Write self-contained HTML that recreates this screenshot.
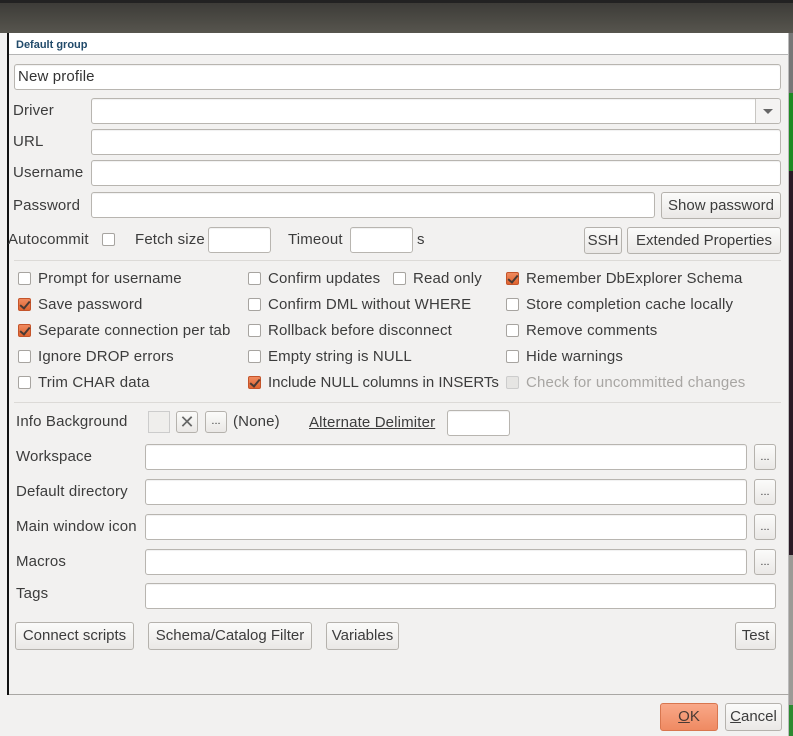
<!DOCTYPE html>
<html><head><meta charset="utf-8"><style>
*{box-sizing:border-box;margin:0;padding:0}
body{width:793px;height:736px;overflow:hidden;background:#f2f1f0;font-family:"Liberation Sans",sans-serif;font-size:15px;letter-spacing:.15px;color:#3c3c3c;position:relative}
.a{position:absolute;white-space:nowrap}
.in{position:absolute;background:#fff;border:1px solid #b8b5b0;border-radius:3px;box-shadow:inset 0 1px 1px rgba(0,0,0,.06)}
.bt{position:absolute;border:1px solid #b5b2ad;border-radius:3px;background:linear-gradient(#fbfbfa,#eae8e6);text-align:center;color:#3c3c3c;font-size:15px;letter-spacing:0}
.cb{position:absolute;width:13px;height:13px;border:1px solid #a7a4a0;border-radius:2px;background:#fff}
.ck{position:absolute;width:13px;height:13px;border:1px solid #c4542a;border-radius:2px;background:linear-gradient(#f08a5f,#e0642f)}
.ck::after{content:"";position:absolute;left:3px;top:0px;width:4px;height:8px;border:solid #4a3a34;border-width:0 2px 2px 0;transform:rotate(40deg)}
.lb{position:absolute;white-space:nowrap;line-height:16px}
</style></head><body>
<div class="a" style="left:0;top:0;width:793px;height:33px;background:linear-gradient(#3d3c38,#57554e);border-top:3px solid #222"></div>
<div class="a" style="left:789px;top:33px;width:4px;height:703px;background:#2a1a25"></div>
<div class="a" style="left:789px;top:33px;width:4px;height:60px;background:#777"></div>
<div class="a" style="left:789px;top:93px;width:4px;height:78px;background:#1c8a22"></div>
<div class="a" style="left:789px;top:555px;width:4px;height:150px;background:#9c9a96"></div>
<div class="a" style="left:789px;top:705px;width:4px;height:31px;background:#2b8a30"></div>
<div class="a" style="left:0;top:33px;width:789px;height:703px;background:#f2f1f0;border-right:1px solid #bbb"></div>
<div class="a" style="left:7px;top:33px;width:2px;height:662px;background:#111"></div>
<div class="a" style="left:9px;top:33px;width:779px;height:22px;background:#fff;border-bottom:1px solid #b5b5b5"></div>
<div class="lb" style="left:16px;top:37px;font-size:11px;font-weight:bold;color:#214a6a;letter-spacing:0">Default group</div>
<div class="a" style="left:9px;top:694px;width:780px;height:1px;background:#a9a7a4"></div>

<div class="in" style="left:14px;top:64px;width:767px;height:26px"></div>
<div class="lb" style="left:18px;top:69px;font-size:15px;color:#333">New profile</div>

<div class="lb" style="left:13px;top:103px">Driver</div>
<div class="in" style="left:91px;top:98px;width:690px;height:26px"></div>
<div class="a" style="left:755px;top:99px;width:25px;height:24px;border-left:1px solid #c8c6c2;background:#f4f3f2;border-radius:0 3px 3px 0"></div>
<div class="a" style="left:763px;top:109px;border-left:5px solid transparent;border-right:5px solid transparent;border-top:5px solid #666"></div>

<div class="lb" style="left:13px;top:134px">URL</div>
<div class="in" style="left:91px;top:129px;width:690px;height:26px"></div>
<div class="lb" style="left:13px;top:165px">Username</div>
<div class="in" style="left:91px;top:160px;width:690px;height:26px"></div>
<div class="lb" style="left:13px;top:198px">Password</div>
<div class="in" style="left:91px;top:192px;width:564px;height:26px"></div>
<div class="bt" style="left:661px;top:192px;width:120px;height:27px;line-height:25px">Show password</div>

<div class="lb" style="left:8px;top:232px">Autocommit</div>
<div class="cb" style="left:102px;top:233px"></div>
<div class="lb" style="left:135px;top:232px">Fetch size</div>
<div class="in" style="left:208px;top:227px;width:63px;height:26px"></div>
<div class="lb" style="left:288px;top:232px">Timeout</div>
<div class="in" style="left:350px;top:227px;width:63px;height:26px"></div>
<div class="lb" style="left:417px;top:232px">s</div>
<div class="bt" style="left:584px;top:227px;width:38px;height:27px;line-height:25px">SSH</div>
<div class="bt" style="left:627px;top:227px;width:154px;height:27px;line-height:25px">Extended Properties</div>
<div class="a" style="left:14px;top:260px;width:767px;height:1px;background:#dcdad7"></div>

<div class="cb" style="left:18px;top:272px"></div><div class="lb" style="left:38px;top:271px">Prompt for username</div>
<div class="ck" style="left:18px;top:298px"></div><div class="lb" style="left:38px;top:297px">Save password</div>
<div class="ck" style="left:18px;top:324px"></div><div class="lb" style="left:38px;top:323px">Separate connection per tab</div>
<div class="cb" style="left:18px;top:350px"></div><div class="lb" style="left:38px;top:349px">Ignore DROP errors</div>
<div class="cb" style="left:18px;top:376px"></div><div class="lb" style="left:38px;top:375px">Trim CHAR data</div>

<div class="cb" style="left:248px;top:272px"></div><div class="lb" style="left:268px;top:271px">Confirm updates</div>
<div class="cb" style="left:393px;top:272px"></div><div class="lb" style="left:413px;top:271px">Read only</div>
<div class="cb" style="left:248px;top:298px"></div><div class="lb" style="left:268px;top:297px">Confirm DML without WHERE</div>
<div class="cb" style="left:248px;top:324px"></div><div class="lb" style="left:268px;top:323px">Rollback before disconnect</div>
<div class="cb" style="left:248px;top:350px"></div><div class="lb" style="left:268px;top:349px">Empty string is NULL</div>
<div class="ck" style="left:248px;top:376px"></div><div class="lb" style="left:268px;top:375px;letter-spacing:0">Include NULL columns in INSERTs</div>

<div class="ck" style="left:506px;top:272px"></div><div class="lb" style="left:526px;top:271px">Remember DbExplorer Schema</div>
<div class="cb" style="left:506px;top:298px"></div><div class="lb" style="left:526px;top:297px">Store completion cache locally</div>
<div class="cb" style="left:506px;top:324px"></div><div class="lb" style="left:526px;top:323px">Remove comments</div>
<div class="cb" style="left:506px;top:350px"></div><div class="lb" style="left:526px;top:349px">Hide warnings</div>
<div class="cb" style="left:506px;top:376px;background:#e6e5e3;border-color:#ccc"></div><div class="lb" style="left:526px;top:375px;color:#a8a6a3">Check for uncommitted changes</div>
<div class="a" style="left:14px;top:402px;width:767px;height:1px;background:#dcdad7"></div>

<div class="lb" style="left:16px;top:414px">Info Background</div>
<div class="a" style="left:148px;top:411px;width:22px;height:22px;border:1px solid #ccc;background:#efeeec"></div>
<div class="bt" style="left:176px;top:411px;width:22px;height:22px;line-height:20px;font-size:18px;color:#666">✕</div>
<div class="bt" style="left:205px;top:411px;width:22px;height:22px;line-height:18px;font-size:11px">...</div>
<div class="lb" style="left:233px;top:414px">(None)</div>
<div class="lb" style="left:309px;top:415px;text-decoration:underline">Alternate Delimiter</div>
<div class="in" style="left:447px;top:410px;width:63px;height:26px"></div>

<div class="lb" style="left:16px;top:449px">Workspace</div>
<div class="in" style="left:145px;top:444px;width:602px;height:26px"></div>
<div class="bt" style="left:754px;top:444px;width:22px;height:26px;line-height:24px;font-size:11px">...</div>
<div class="lb" style="left:16px;top:484px">Default directory</div>
<div class="in" style="left:145px;top:479px;width:602px;height:26px"></div>
<div class="bt" style="left:754px;top:479px;width:22px;height:26px;line-height:24px;font-size:11px">...</div>
<div class="lb" style="left:16px;top:519px">Main window icon</div>
<div class="in" style="left:145px;top:514px;width:602px;height:26px"></div>
<div class="bt" style="left:754px;top:514px;width:22px;height:26px;line-height:24px;font-size:11px">...</div>
<div class="lb" style="left:16px;top:554px">Macros</div>
<div class="in" style="left:145px;top:549px;width:602px;height:26px"></div>
<div class="bt" style="left:754px;top:549px;width:22px;height:26px;line-height:24px;font-size:11px">...</div>
<div class="lb" style="left:16px;top:586px">Tags</div>
<div class="in" style="left:145px;top:583px;width:631px;height:26px"></div>

<div class="bt" style="left:15px;top:622px;width:119px;height:28px;line-height:26px">Connect scripts</div>
<div class="bt" style="left:148px;top:622px;width:164px;height:28px;line-height:26px">Schema/Catalog Filter</div>
<div class="bt" style="left:326px;top:622px;width:73px;height:28px;line-height:26px">Variables</div>
<div class="bt" style="left:735px;top:622px;width:41px;height:28px;line-height:26px">Test</div>

<div class="bt" style="left:660px;top:703px;width:58px;height:28px;line-height:26px;background:linear-gradient(#f9a888,#ef8a62);border-color:#d8764f;color:#4a3a34"><u>O</u>K</div>
<div class="bt" style="left:725px;top:703px;width:57px;height:28px;line-height:26px"><u>C</u>ancel</div>
</body></html>
